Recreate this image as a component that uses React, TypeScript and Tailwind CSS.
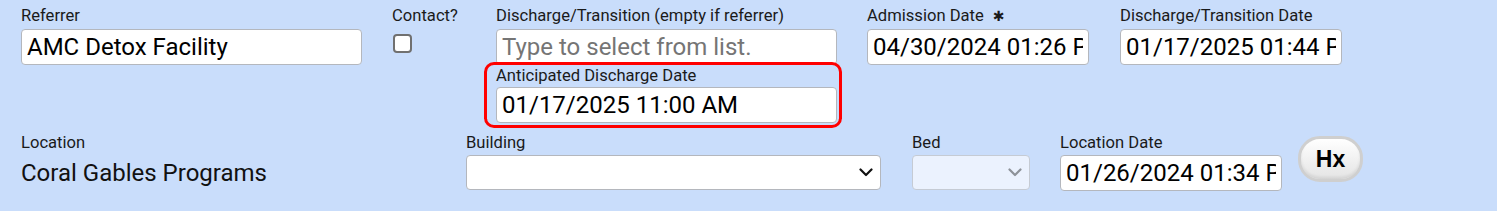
import type { ReactNode } from 'react';

const labelCls = 'block h-[20px] text-[16.6px] leading-[20px] text-[#1a1a1a] whitespace-nowrap';
const inputCls =
  'block h-[36px] rounded-[4px] border border-[#b4b7bd] bg-white px-[5px] text-[24px] text-black outline-none';

function Field({ label, children, className }: { label: ReactNode; children: ReactNode; className?: string }) {
  return (
    <div className={className}>
      <label className={`${labelCls} mb-[3px]`}>{label}</label>
      {children}
    </div>
  );
}

function Chevron({ color }: { color: string }) {
  return (
    <svg width="14" height="9" viewBox="0 0 14 9" fill="none" className="pointer-events-none absolute right-[8px] top-[13px]">
      <path d="M1.5 1.5L7 7L12.5 1.5" stroke={color} strokeWidth="2.2" strokeLinecap="round" strokeLinejoin="round" />
    </svg>
  );
}

export default function App() {
  return (
    <div className="h-[211px] w-[1497px] overflow-hidden bg-[#c9ddfb] font-['Roboto',sans-serif]">
      {/* row 1 */}
      <div className="flex pl-[21px] pt-[6px]">
        <Field label="Referrer" className="w-[371px]">
          <input readOnly value="AMC Detox Facility" className={`${inputCls} w-[341px]`} />
        </Field>
        <Field label="Contact?" className="w-[104px]">
          <input type="checkbox" className="mt-[8px] ml-[1px] block h-[19px] w-[19px] appearance-none rounded-[4px] border-2 border-[#707070] bg-white" />
        </Field>
        <div className="w-[371px]">
          <label className={`${labelCls} mb-[3px]`}>Discharge/Transition (empty if referrer)</label>
          <input readOnly placeholder="Type to select from list." className={`${inputCls} w-[341px] placeholder:text-[#757575]`} />
          <div className="relative -mt-[3px] -ml-[12px] w-[358px] rounded-[10px] border-[3px] border-[#ff0000] bg-[#c9ddfb] pt-[1px] pl-[9px] pb-[2px]">
            <label className={`${labelCls} mb-[1px]`}>Anticipated Discharge Date</label>
            <input readOnly value="01/17/2025 11:00 AM" className={`${inputCls} w-[341px]`} />
          </div>
        </div>
        <Field
          label={
            <span className="flex items-center">
              Admission Date
              <span className="ml-[9px] text-[14px] font-bold leading-none font-['DejaVu_Sans',sans-serif]">✱</span>
            </span>
          }
          className="w-[253px]"
        >
          <input readOnly value="04/30/2024 01:26 PM" className={`${inputCls} w-[222px]`} />
        </Field>
        <Field label="Discharge/Transition Date">
          <input readOnly value="01/17/2025 01:44 PM" className={`${inputCls} w-[222px]`} />
        </Field>
      </div>

      {/* row 2 */}
      <div className="flex pl-[21px] pt-[5px]">
        <div className="w-[445px]">
          <label className={`${labelCls} mb-[2px]`}>Location</label>
          <div className="flex h-[36px] items-center text-[24px] text-[#111]">Coral Gables Programs</div>
        </div>
        <div className="w-[446px]">
          <label className={`${labelCls} mb-[2px]`}>Building</label>
          <div className="relative w-[415px]">
            <select className="block h-[35px] w-full appearance-none rounded-[4px] border border-[#b4b7bd] bg-white px-[5px] text-[20px]">
              <option></option>
            </select>
            <Chevron color="#111" />
          </div>
        </div>
        <div className="w-[148px]">
          <label className={`${labelCls} mb-[2px]`}>Bed</label>
          <div className="relative w-[118px]">
            <select disabled className="block h-[35px] w-full appearance-none rounded-[4px] border border-[#c5cbd4] bg-[#ebf2fe] px-[5px] text-[20px]">
              <option></option>
            </select>
            <Chevron color="#8d9299" />
          </div>
        </div>
        <div className="w-[238px]">
          <label className={`${labelCls} mb-[2px]`}>Location Date</label>
          <input readOnly value="01/26/2024 01:34 PM" className={`${inputCls} w-[222px]`} />
        </div>
        <div className="pt-[3px]">
          <button className="flex h-[46px] w-[65px] items-center justify-center rounded-[22px] border-[3px] border-[#cfcfcf] bg-gradient-to-b from-white to-[#e4e4e4] font-['Liberation_Sans',sans-serif] text-[23px] font-bold text-black shadow-[inset_0_-2px_3px_rgba(0,0,0,0.08)]">
            Hx
          </button>
        </div>
      </div>
    </div>
  );
}
